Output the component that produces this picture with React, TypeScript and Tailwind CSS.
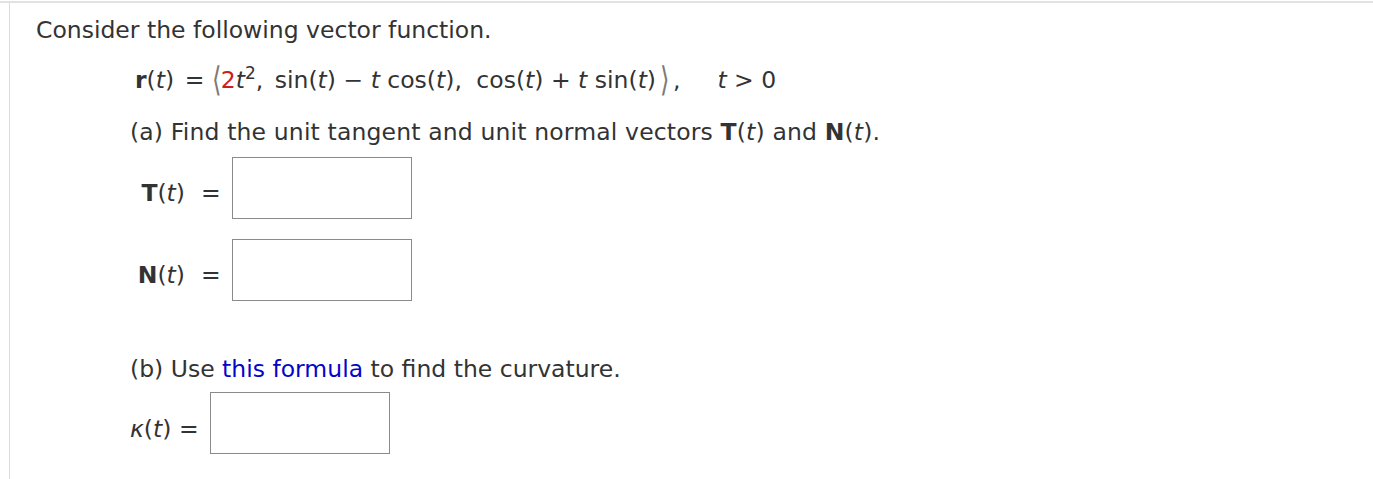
import React from "react";

const I = ({ children }: { children: React.ReactNode }) => <i className="italic">{children}</i>;

const Bracket = ({ c }: { c: string }) => (
  <span className="inline-block align-middle text-[#7a7a7a] text-[24px] leading-[24px] scale-y-[1.4] -translate-y-[2px] font-light">{c}</span>
);

export default function App() {
  return (
    <div className="w-[1373px] h-[479px] bg-white overflow-hidden">
      <div className="border-t-2 border-[#e2e2e2] mt-px h-full">
        <div className="ml-[9px] border-l border-[#dcdcdc] h-full pl-[26px] pt-[12px] text-[#333] font-['DejaVu_Sans',Verdana,sans-serif] text-[23.5px]">
          <div className="leading-[30px] h-[30px]">Consider the following vector function.</div>
          <div className="pl-[99px] mt-[20px] leading-[30px] h-[30px] whitespace-pre">
            <b className="font-bold">r</b>(<I>t</I>)<span className="inline-block w-[3px]" /> = <Bracket c="⟨" />
            <span className="text-[#cc1f1a]">2</span>
            <I>t</I>
            <sup className="text-[17px] -top-[0.55em]">2</sup>,<span className="inline-block w-[4px]" /> sin(<I>t</I>) − <I>t</I> cos(<I>t</I>),<span className="inline-block w-[7px]" /> cos(<I>t</I>) + <I>t</I> sin(<I>t</I>)
            <span className="inline-block w-[4px]" /><Bracket c="⟩" /><span className="inline-block w-[4px]" />,    <span className="inline-block w-[7px]" /><I>t</I> &gt; 0
          </div>
          <div className="pl-[94px] mt-[22px] leading-[30px] h-[30px] tracking-[0.15px]">
            (a) Find the unit tangent and unit normal vectors <b>T</b>(<I>t</I>) and <b>N</b>(<I>t</I>).
          </div>
          <div className="mt-[10px] flex items-center">
            <span className="w-[149px] text-right mt-[9px] whitespace-pre leading-[30px]"><b>T</b>(<I>t</I>)</span>
            <span className="ml-[16px] mt-[9px] leading-[30px]">=</span>
            <div className="ml-[11px] w-[180px] h-[62px] border border-[#8a8a8a]" />
          </div>
          <div className="mt-[20px] flex items-center">
            <span className="w-[149px] text-right mt-[9px] whitespace-pre leading-[30px]"><b>N</b>(<I>t</I>)</span>
            <span className="ml-[16px] mt-[9px] leading-[30px]">=</span>
            <div className="ml-[11px] w-[180px] h-[62px] border border-[#8a8a8a]" />
          </div>
          <div className="pl-[94px] mt-[53px] leading-[30px] h-[30px]">
            (b) Use <span className="text-[#0505c8]">this formula</span> to find the curvature.
          </div>
          <div className="pl-[94px] mt-[8px] flex items-center">
            <span className="whitespace-pre mt-[11px] leading-[30px]"><I>κ</I>(<I>t</I>) =</span>
            <div className="ml-[11px] w-[180px] h-[62px] border border-[#8a8a8a]" />
          </div>
        </div>
      </div>
    </div>
  );
}
